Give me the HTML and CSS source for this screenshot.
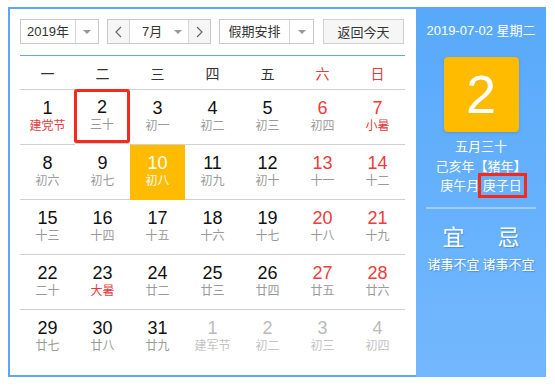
FILE: index.html
```html
<!DOCTYPE html>
<html lang="zh-CN">
<head>
  <meta charset="UTF-8">
  <title>万年历</title>
  <link rel="stylesheet" href="styles.css">
</head>
<body>
  <div class="calendar">
    <div class="main">
      <div class="toolbar">
        <div class="select year"><span class="label">2019年</span><span class="drop"><i class="caret"></i></span></div>
        <div class="select month">
          <span class="step"><svg width="7" height="12" viewBox="0 0 7 12"><polyline points="6,1 1,6 6,11" fill="none" stroke="#666" stroke-width="1.2"/></svg></span>
          <span class="label">7月</span><span class="caret-box"><i class="caret"></i></span>
          <span class="step"><svg width="7" height="12" viewBox="0 0 7 12"><polyline points="1,1 6,6 1,11" fill="none" stroke="#666" stroke-width="1.2"/></svg></span>
        </div>
        <div class="select holiday"><span class="label">假期安排</span><span class="drop"><i class="caret"></i></span></div>
        <button class="btn">返回今天</button>
      </div>

      <div class="week">
        <span>一</span><span>二</span><span>三</span><span>四</span><span>五</span><span class="weekend">六</span><span class="weekend">日</span>
      </div>

      <div class="days">
        <div class="day"><b>1</b><small class="fest">建党节</small></div>
        <div class="day selected"><b>2</b><small>三十</small></div>
        <div class="day"><b>3</b><small>初一</small></div>
        <div class="day"><b>4</b><small>初二</small></div>
        <div class="day"><b>5</b><small>初三</small></div>
        <div class="day weekend"><b>6</b><small>初四</small></div>
        <div class="day weekend"><b>7</b><small class="fest">小暑</small></div>

        <div class="day"><b>8</b><small>初六</small></div>
        <div class="day"><b>9</b><small>初七</small></div>
        <div class="day today-cell"><b>10</b><small>初八</small></div>
        <div class="day"><b>11</b><small>初九</small></div>
        <div class="day"><b>12</b><small>初十</small></div>
        <div class="day weekend"><b>13</b><small>十一</small></div>
        <div class="day weekend"><b>14</b><small>十二</small></div>

        <div class="day"><b>15</b><small>十三</small></div>
        <div class="day"><b>16</b><small>十四</small></div>
        <div class="day"><b>17</b><small>十五</small></div>
        <div class="day"><b>18</b><small>十六</small></div>
        <div class="day"><b>19</b><small>十七</small></div>
        <div class="day weekend"><b>20</b><small>十八</small></div>
        <div class="day weekend"><b>21</b><small>十九</small></div>

        <div class="day"><b>22</b><small>二十</small></div>
        <div class="day"><b>23</b><small class="fest">大暑</small></div>
        <div class="day"><b>24</b><small>廿二</small></div>
        <div class="day"><b>25</b><small>廿三</small></div>
        <div class="day"><b>26</b><small>廿四</small></div>
        <div class="day weekend"><b>27</b><small>廿五</small></div>
        <div class="day weekend"><b>28</b><small>廿六</small></div>

        <div class="day"><b>29</b><small>廿七</small></div>
        <div class="day"><b>30</b><small>廿八</small></div>
        <div class="day"><b>31</b><small>廿九</small></div>
        <div class="day other"><b>1</b><small>建军节</small></div>
        <div class="day other"><b>2</b><small>初二</small></div>
        <div class="day other"><b>3</b><small>初三</small></div>
        <div class="day other"><b>4</b><small>初四</small></div>
      </div>
    </div>

    <aside class="panel">
      <div class="panel-date">2019-07-02 星期二</div>
      <div class="panel-day">2</div>
      <div class="panel-lunar">
        <p>五月三十</p>
        <p>己亥年【猪年】</p>
        <p>庚午月 <span class="mark">庚子日</span></p>
      </div>
      <div class="panel-line"></div>
      <div class="advice">
        <div class="advice-col"><strong>宜</strong><span>诸事不宜</span></div>
        <div class="advice-col"><strong>忌</strong><span>诸事不宜</span></div>
      </div>
    </aside>
  </div>
</body>
</html>
```

FILE: styles.css
```css
/* Base */
* { box-sizing: border-box; margin: 0; padding: 0; }
body { margin: 0; padding: 7px 8px; background: #fff; font-family: "Liberation Sans", "Noto Sans CJK SC", sans-serif; color: #333; }

/* Layout */
.calendar { display: flex; width: 538px; height: 370px; }
.main { width: 408px; border: 2px solid #5aa8f7; border-right: none; padding: 10px 11px 10px 10px; }

/* Toolbar */
.toolbar { display: flex; height: 25px; margin-bottom: 11px; }
.select { display: flex; height: 25px; border: 1px solid #c9c9c9; font-size: 13px; line-height: 23px; color: #333; }
.select .label { flex: 1; text-align: center; }
.select .drop { width: 23px; border-left: 1px solid #d6d6d6; display: flex; align-items: center; justify-content: center; }
.caret { display: block; width: 0; height: 0; border-left: 4px solid transparent; border-right: 4px solid transparent; border-top: 4px solid #999; }
.year { width: 79px; margin-right: 8px; }
.month { width: 104px; margin-right: 8px; }
.month .step { width: 22px; background: #f5f5f5; display: flex; align-items: center; justify-content: center; }
.month .step:first-child { border-right: 1px solid #d6d6d6; }
.month .step:last-child { border-left: 1px solid #d6d6d6; }
.month .label { text-align: left; padding-left: 12px; }
.month .caret-box { width: 20px; display: flex; align-items: center; justify-content: center; }
.holiday { width: 95px; margin-right: 9px; }
.holiday .drop { width: 24px; }
.btn { width: 81px; height: 25px; border: 1px solid #d0d0d0; background: #f6f6f6; font-family: inherit; font-size: 13px; color: #333; }

/* Week header */
.week { display: grid; grid-template-columns: repeat(7, 1fr); height: 35px; border-top: 1px solid #5aa8f7; border-bottom: 1px solid #d0d0d0; align-items: center; text-align: center; font-size: 14px; color: #333; }
.week .weekend { color: #e8393c; }

/* Days */
.days { display: grid; grid-template-columns: repeat(7, 1fr); }
.day { height: 55px; border-bottom: 1px solid #d0d0d0; display: flex; flex-direction: column; align-items: center; justify-content: center; padding-bottom: 1px; }
.day:nth-last-child(-n+7) { border-bottom: none; height: 54px; }
.day b { font-weight: normal; font-size: 18px; line-height: 20px; color: #111; }
.day small { font-size: 12px; line-height: 17px; color: #9a9a9a; }
.day small.fest { color: #e8393c; }
.day.weekend b { color: #ee3b3b; }
.day.other b { color: #bbb; }
.day.other small { color: #c4c4c4; }
.day.selected { box-shadow: inset 0 0 0 3px #f52a1c; border-radius: 3px; margin-top: -1px; margin-left: -1px; width: calc(100% + 1px); }
.day.today-cell { background: #ffbb00; border-bottom-color: #ffbb00; }
.day.today-cell b, .day.today-cell small { color: #fff; }

/* Side panel */
.panel { width: 130px; background: linear-gradient(#58a9fa, #73b8fe); color: #fff; text-align: center; padding: 9px 10px 0; }
.panel-date { font-size: 13px; line-height: 30px; }
.panel-day { width: 75px; height: 75px; margin: 11px auto 0; background: #ffbb00; border-radius: 4px; box-shadow: 0 1px 3px rgba(0,0,0,0.15); font-size: 54px; line-height: 75px; }
.panel-lunar { margin-top: 5px; font-size: 13px; line-height: 19.5px; }
.mark { outline: 3px solid #f52a1c; outline-offset: 2px; }
.panel-line { height: 2px; background: rgba(255,255,255,0.35); margin-top: 11px; }
.advice { display: flex; margin-top: 14px; text-shadow: 1px 1px 1px rgba(0,40,120,0.25); }
.advice-col { flex: 1; display: flex; flex-direction: column; align-items: center; }
.advice-col strong { font-weight: normal; font-size: 22px; line-height: 30px; }
.advice-col span { font-size: 13px; line-height: 20px; margin-top: 2px; white-space: nowrap; }
```
